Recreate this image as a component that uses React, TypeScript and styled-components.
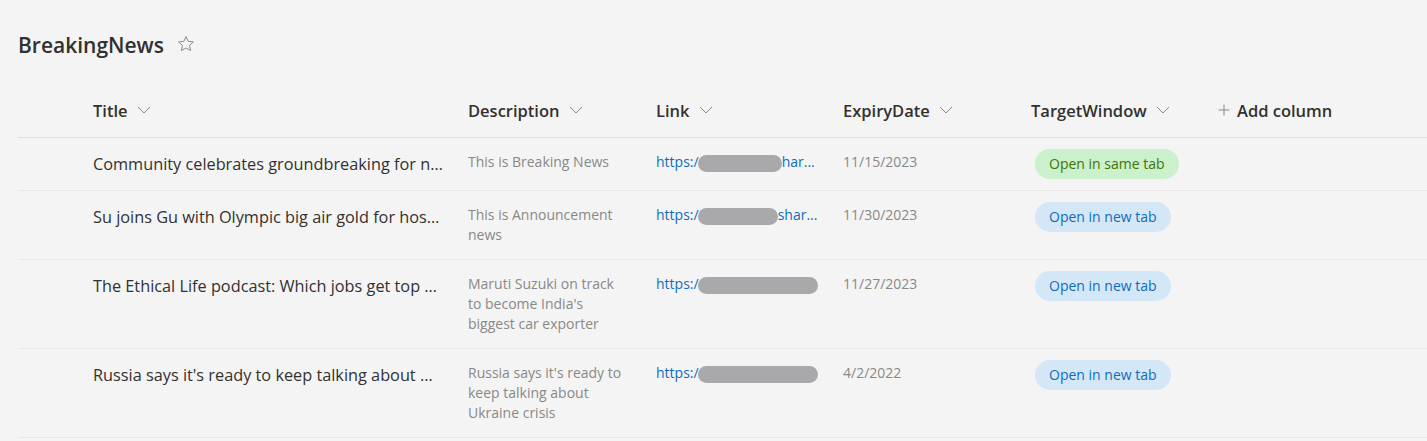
import styled, { createGlobalStyle } from "styled-components"

type Target = "same" | "new"

interface NewsItem {
  title: string
  description: string
  linkHidden: number
  linkTail?: string
  expiry: string
  target: Target
}

const items: NewsItem[] = [
  {
    title: "Community celebrates groundbreaking for  new community centre",
    description: "This is Breaking News",
    linkHidden: 84,
    linkTail: "har...",
    expiry: "11/15/2023",
    target: "same",
  },
  {
    title: "Su joins Gu with Olympic big air gold for hosts China",
    description: "This is Announcement news",
    linkHidden: 80,
    linkTail: "shar...",
    expiry: "11/30/2023",
    target: "new",
  },
  {
    title: "The Ethical Life podcast: Which jobs get top marks?",
    description: "Maruti Suzuki on track to become India's biggest car exporter",
    linkHidden: 120,
    expiry: "11/27/2023",
    target: "new",
  },
  {
    title: "Russia says it's ready to keep talking about  Ukraine crisis",
    description: "Russia says it's ready to keep talking about Ukraine crisis",
    linkHidden: 120,
    expiry: "4/2/2022",
    target: "new",
  },
]

const columns = ["Title", "Description", "Link", "ExpiryDate", "TargetWindow"]

const GlobalStyle = createGlobalStyle`
  html, body {
    margin: 0;
    background: #f4f4f4;
    font-family: "Segoe UI", "Open Sans", "Noto Sans", sans-serif;
    color: #323130;
  }
`

const Chevron = () => (
  <svg width="14" height="8" viewBox="0 0 14 8" fill="none">
    <polyline points="1,1 7,7 13,1" stroke="#8a8886" strokeWidth="1" />
  </svg>
)

const Star = () => (
  <svg width="18" height="18" viewBox="0 0 20 20" fill="none">
    <path
      d="M10 1.8l2.45 5.3 5.75.6-4.3 3.9 1.2 5.7L10 14.4l-5.1 2.9 1.2-5.7-4.3-3.9 5.75-.6z"
      stroke="#8a8886"
      strokeWidth="1.1"
      strokeLinejoin="round"
    />
  </svg>
)

const Plus = () => (
  <svg width="12" height="12" viewBox="0 0 12 12" fill="none">
    <path d="M6 0.5v11M0.5 6h11" stroke="#8a8886" strokeWidth="1" />
  </svg>
)

export default function App() {
  return (
    <>
      <GlobalStyle />
      <Page>
        <Heading>
          <span>BreakingNews</span>
          <Star />
        </Heading>
        <Grid>
          <HeaderRow>
            <Spacer />
            {columns.map(c => (
              <HeaderCell key={c}>
                {c}
                <Chevron />
              </HeaderCell>
            ))}
            <AddColumn>
              <Plus />
              Add column
            </AddColumn>
          </HeaderRow>
          {items.map(item => (
            <Row key={item.title}>
              <Spacer />
              <TitleCell>{item.title}</TitleCell>
              <DescriptionCell>{item.description}</DescriptionCell>
              <LinkCell>
                https:/
                <Redacted style={{ width: item.linkHidden }} />
                {item.linkTail}
              </LinkCell>
              <MutedCell>{item.expiry}</MutedCell>
              <PillCell>
                <Pill $target={item.target}>{item.target === "same" ? "Open in same tab" : "Open in new tab"}</Pill>
              </PillCell>
              <Cell />
            </Row>
          ))}
        </Grid>
      </Page>
    </>
  )
}

const Page = styled.div`
  padding: 31px 0 0 18px;
`

const Heading = styled.h1`
  margin: 0;
  display: flex;
  align-items: center;
  gap: 13px;
  font-size: 21px;
  line-height: 28px;
  font-weight: 600;
  color: #323130;

  svg {
    margin-top: -2px;
  }
`

const Grid = styled.div`
  margin-top: 24px;
  display: flex;
  flex-direction: column;
`

const rowColumns = "75px 375px 188px 187px 188px 187px 1fr"

const HeaderRow = styled.div`
  display: grid;
  grid-template-columns: ${rowColumns};
  height: 54px;
  align-items: center;
  border-bottom: 1px solid #e1dfdd;
`

const Row = styled.div`
  display: grid;
  grid-template-columns: ${rowColumns};
  align-items: start;
  border-bottom: 1px solid #e8e8e8;
`

const Spacer = styled.div``

const HeaderCell = styled.div`
  display: flex;
  align-items: center;
  gap: 9px;
  font-size: 16.5px;
  font-weight: 600;
  color: #323130;
`

const AddColumn = styled.div`
  display: flex;
  align-items: center;
  gap: 7px;
  font-size: 16.5px;
  font-weight: 600;
  color: #323130;
`

const Cell = styled.div`
  padding: 14px 24px 14px 0;
  min-width: 0;
  font-size: 14px;
  line-height: 20px;
`

const TitleCell = styled(Cell)`
  font-size: 16.3px;
  line-height: 24px;
  white-space: nowrap;
  overflow: hidden;
  text-overflow: ellipsis;
  color: #323130;
`

const MutedCell = styled(Cell)`
  color: #8a8886;
`

const DescriptionCell = styled(MutedCell)`
  padding-right: 30px;
`

const LinkCell = styled(Cell)`
  color: #0f6cbd;
  white-space: nowrap;
  overflow: hidden;
  text-overflow: ellipsis;
`

const Redacted = styled.span`
  display: inline-block;
  height: 17px;
  margin-left: -1px;
  border-radius: 9px;
  background: #a9a9ab;
  vertical-align: -5px;
`

const PillCell = styled(Cell)`
  display: flex;
  align-items: flex-start;
  padding: 11px 24px 11px 4px;
`

const Pill = styled.span<{ $target: Target }>`
  display: inline-block;
  padding: 0 14px;
  height: 30px;
  line-height: 30px;
  border-radius: 15px;
  font-size: 14px;
  white-space: nowrap;
  background: ${p => (p.$target === "same" ? "#caf0cc" : "#d4e7f7")};
  color: ${p => (p.$target === "same" ? "#437406" : "#0f6cbd")};
`
